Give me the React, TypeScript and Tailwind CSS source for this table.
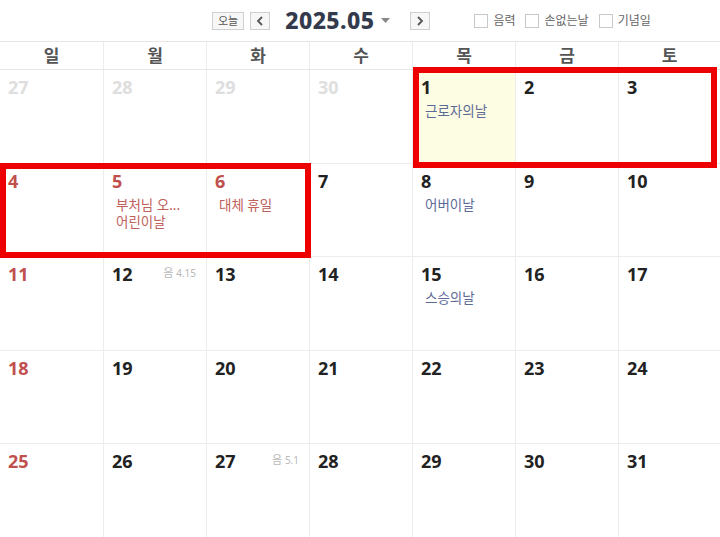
import React from 'react';

type Cell = {
  day: number;
  muted?: boolean;
  red?: boolean;
  today?: boolean;
  events?: { text: string; holiday?: boolean }[];
  lunar?: string;
};

const weekdays = ['일', '월', '화', '수', '목', '금', '토'];

const weeks: Cell[][] = [
  [
    { day: 27, muted: true },
    { day: 28, muted: true },
    { day: 29, muted: true },
    { day: 30, muted: true },
    { day: 1, today: true, events: [{ text: '근로자의날' }] },
    { day: 2 },
    { day: 3 },
  ],
  [
    { day: 4, red: true },
    { day: 5, red: true, events: [{ text: '부처님 오...', holiday: true }, { text: '어린이날', holiday: true }] },
    { day: 6, red: true, events: [{ text: '대체 휴일', holiday: true }] },
    { day: 7 },
    { day: 8, events: [{ text: '어버이날' }] },
    { day: 9 },
    { day: 10 },
  ],
  [
    { day: 11, red: true },
    { day: 12, lunar: '4.15' },
    { day: 13 },
    { day: 14 },
    { day: 15, events: [{ text: '스승의날' }] },
    { day: 16 },
    { day: 17 },
  ],
  [
    { day: 18, red: true },
    { day: 19 },
    { day: 20 },
    { day: 21 },
    { day: 22 },
    { day: 23 },
    { day: 24 },
  ],
  [
    { day: 25, red: true },
    { day: 26 },
    { day: 27, lunar: '5.1' },
    { day: 28 },
    { day: 29 },
    { day: 30 },
    { day: 31 },
  ],
];

const font = { fontFamily: '"Noto Sans", "Noto Sans CJK KR", sans-serif' };

function Checkbox({ label }: { label: string }) {
  return (
    <label className="flex items-center gap-[5px] text-[12px] text-[#666]">
      <span className="w-[14px] h-[14px] border border-[#c8c8c8] bg-white" />
      {label}
    </label>
  );
}

export default function App() {
  return (
    <div className="relative w-[720px] h-[537px] bg-white flex flex-col overflow-hidden" style={font}>
      {/* Top bar */}
      <div className="h-[42px] flex items-center border-b border-[#e6e6e6] shrink-0">
        <div className="flex items-center ml-[212px]">
          <button className="h-[18px] px-[5px] border border-[#cfcfcf] bg-[#f7f7f7] text-[11px] leading-none text-[#555]">오늘</button>
          <button className="ml-[6px] w-[20px] h-[18px] border border-[#cfcfcf] bg-[#f7f7f7] flex items-center justify-center">
            <svg width="8" height="10" viewBox="0 0 8 10"><path d="M6 1 L2 5 L6 9" stroke="#555" strokeWidth="1.8" fill="none" /></svg>
          </button>
          <span className="ml-[15px] text-[23px] font-extrabold text-[#333a4c] tracking-[0.4px] leading-none">2025.05</span>
          <svg className="ml-[7px]" width="9" height="6" viewBox="0 0 9 6"><path d="M0 0 H9 L4.5 5 Z" fill="#888" /></svg>
          <button className="ml-[20px] w-[20px] h-[18px] border border-[#cfcfcf] bg-[#f7f7f7] flex items-center justify-center">
            <svg width="8" height="10" viewBox="0 0 8 10"><path d="M2 1 L6 5 L2 9" stroke="#555" strokeWidth="1.8" fill="none" /></svg>
          </button>
        </div>
        <div className="ml-[44px] flex items-center gap-[10px]">
          <Checkbox label="음력" />
          <Checkbox label="손없는날" />
          <Checkbox label="기념일" />
        </div>
      </div>

      {/* Weekday header */}
      <div className="grid grid-cols-[104px_103px_103px_103px_103px_103px_1fr] h-[28px] shrink-0 border-b border-[#e6e6e6]">
        {weekdays.map((w, i) => (
          <div
            key={w}
            className={`flex items-center justify-center text-[17px] font-bold text-[#555] ${i < 6 ? 'border-r border-[#ececec]' : ''}`}
          >
            {w}
          </div>
        ))}
      </div>

      {/* Weeks */}
      <div className="flex-1 flex flex-col">
        {weeks.map((week, wi) => (
          <div
            key={wi}
            className={`flex-1 grid grid-cols-[104px_103px_103px_103px_103px_103px_1fr] ${wi < 4 ? 'border-b border-[#ececec]' : ''}`}
          >
            {week.map((c, ci) => (
              <div
                key={ci}
                className={`relative pt-[6px] ${ci < 6 ? 'border-r border-[#ececec]' : ''} ${c.today ? 'bg-[#fdfde3]' : ''}`}
              >
                <div
                  className={`pl-[8px] text-[18px] font-bold leading-[22px] ${
                    c.muted ? 'text-[#dedede]' : c.red ? 'text-[#c0504d]' : 'text-[#222]'
                  }`}
                >
                  {c.day}
                </div>
                {c.lunar && (
                  <div className="absolute right-[10px] top-[10px] text-[11px] text-[#b8b8b8] leading-none">
                    음 <span className="text-[10px]">{c.lunar}</span>
                  </div>
                )}
                {c.events && (
                  <div className="mt-[5px] pl-[12px] flex flex-col">
                    {c.events.map((e) => (
                      <span
                        key={e.text}
                        className={`text-[13.5px] leading-[17px] ${e.holiday ? 'text-[#c0605a]' : 'text-[#5d6a96]'}`}
                      >
                        {e.text}
                      </span>
                    ))}
                  </div>
                )}
              </div>
            ))}
          </div>
        ))}
      </div>

      {/* Red annotation boxes */}
      <div className="absolute left-[413px] top-[67px] w-[304px] h-[101px] border-[6px] border-[#ee0000] pointer-events-none" />
      <div className="absolute left-0 top-[163px] w-[311px] h-[95px] border-[6px] border-[#ee0000] pointer-events-none" />
    </div>
  );
}
